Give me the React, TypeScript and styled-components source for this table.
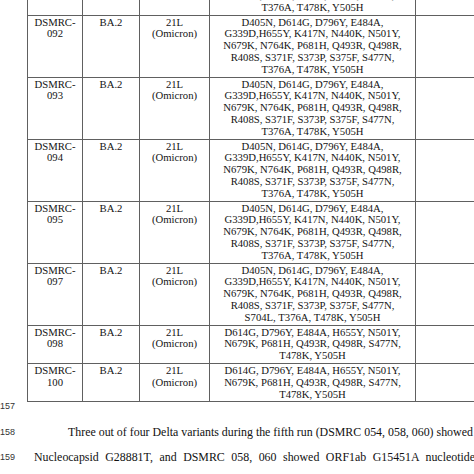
import React from 'react';
import styled, {createGlobalStyle} from 'styled-components';

const Global = createGlobalStyle`
  * { box-sizing: border-box; }
  html, body {
    margin: 0;
    padding: 0;
    background: #fff;
    overflow: hidden;
  }
  body {
    width: 474px;
    height: 474px;
  }
`;

const FULL = [
  'D405N, D614G, D796Y, E484A,',
  'G339D,H655Y, K417N, N440K, N501Y,',
  'N679K, N764K, P681H, Q493R, Q498R,',
  'R408S, S371F, S373P, S375F, S477N,',
  'T376A, T478K, Y505H',
];

const WITH_S704L = [
  'D405N, D614G, D796Y, E484A,',
  'G339D,H655Y, K417N, N440K, N501Y,',
  'N679K, N764K, P681H, Q493R, Q498R,',
  'R408S, S371F, S373P, S375F, S477N,',
  'S704L, T376A, T478K, Y505H',
];

const SHORT = [
  'D614G, D796Y, E484A, H655Y, N501Y,',
  'N679K, P681H, Q493R, Q498R, S477N,',
  'T478K, Y505H',
];

interface Sample {
  id: string;
  lineage: string;
  clade: string;
  mutations: string[];
}

const samples: Sample[] = [
  {id: '092', lineage: 'BA.2', clade: '21L', mutations: FULL},
  {id: '093', lineage: 'BA.2', clade: '21L', mutations: FULL},
  {id: '094', lineage: 'BA.2', clade: '21L', mutations: FULL},
  {id: '095', lineage: 'BA.2', clade: '21L', mutations: FULL},
  {id: '097', lineage: 'BA.2', clade: '21L', mutations: WITH_S704L},
  {id: '098', lineage: 'BA.2', clade: '21L', mutations: SHORT},
  {id: '100', lineage: 'BA.2', clade: '21L', mutations: SHORT},
];

// tail of the row continued from the previous page
const carriedOver = FULL.slice(3);

const BORDER = '#606060';

const Page = styled.div`
  width: 474px;
  height: 474px;
  overflow: hidden;
  font-family: 'Liberation Serif', 'Times New Roman', serif;
  color: #141414;
`;

const Table = styled.div`
  margin: -12px 0 0 27px;
  width: 520px;
  border-left: 1px solid ${BORDER};
  border-top: 1px solid ${BORDER};
`;

const Row = styled.div`
  display: grid;
  grid-template-columns: 55px 57px 70px 206px 1fr;
  border-bottom: 1px solid ${BORDER};
`;

const Cell = styled.div<{$last?: boolean}>`
  padding: 1px 0;
  font-size: 10.7px;
  line-height: 11.8px;
  text-align: center;
  border-right: ${(p) => (p.$last ? 'none' : `1px solid ${BORDER}`)};
`;

const CellLine = styled.div`
  white-space: nowrap;
`;

const Prose = styled.div`
  margin-top: -8px;
  width: 475px;
`;

const ProseLine = styled.div`
  display: grid;
  grid-template-columns: 15px 1fr;
  column-gap: 19px;
  height: 25.5px;
`;

const LineNo = styled.span`
  font-family: 'Liberation Sans', Arial, sans-serif;
  font-size: 9px;
  line-height: 25.5px;
  color: #333;
  text-align: right;
`;

const ProseText = styled.span<{$indent?: boolean; $justify?: boolean}>`
  font-size: 11.9px;
  line-height: 25.5px;
  color: #111;
  padding-left: ${(p) => (p.$indent ? '34px' : '0')};
  white-space: ${(p) => (p.$justify ? 'normal' : 'nowrap')};
  text-align: ${(p) => (p.$justify ? 'justify' : 'left')};
  text-align-last: ${(p) => (p.$justify ? 'justify' : 'auto')};
`;

export default function App() {
  return (
    <Page>
      <Global />
      <Table>
        <Row>
          <Cell />
          <Cell />
          <Cell />
          <Cell>
            {carriedOver.map((m, i) => (
              <CellLine key={i}>{m}</CellLine>
            ))}
          </Cell>
          <Cell $last />
        </Row>
        {samples.map((s) => (
          <Row key={s.id}>
            <Cell>
              <CellLine>DSMRC-</CellLine>
              <CellLine>{s.id}</CellLine>
            </Cell>
            <Cell>
              <CellLine>{s.lineage}</CellLine>
            </Cell>
            <Cell>
              <CellLine>{s.clade}</CellLine>
              <CellLine>(Omicron)</CellLine>
            </Cell>
            <Cell>
              {s.mutations.map((m, i) => (
                <CellLine key={i}>{m}</CellLine>
              ))}
            </Cell>
            <Cell $last />
          </Row>
        ))}
      </Table>
      <Prose>
        <ProseLine>
          <LineNo>157</LineNo>
          <ProseText />
        </ProseLine>
        <ProseLine>
          <LineNo>158</LineNo>
          <ProseText $indent>
            Three out of four Delta variants during the fifth run (DSMRC 054, 058, 060) showed
          </ProseText>
        </ProseLine>
        <ProseLine>
          <LineNo>159</LineNo>
          <ProseText $justify>
            Nucleocapsid G28881T, and DSMRC 058, 060 showed ORF1ab G15451A nucleotide
          </ProseText>
        </ProseLine>
      </Prose>
    </Page>
  );
}
